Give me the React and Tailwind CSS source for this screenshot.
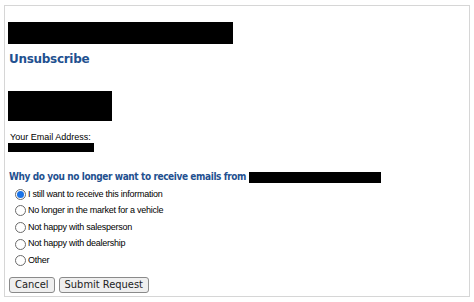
import { useState } from "react";

const reasons = [
  "I still want to receive this information",
  "No longer in the market for a vehicle",
  "Not happy with salesperson",
  "Not happy with dealership",
  "Other",
];

function Radio({ checked }) {
  return (
    <span className="flex h-[11px] w-[11px] shrink-0 items-center justify-center rounded-full border border-[#6b6b6b] bg-white">
      {checked && <span className="h-[7px] w-[7px] rounded-full bg-[#1a73e8]" />}
    </span>
  );
}

export default function App() {
  const [reason, setReason] = useState(0);

  return (
    <div className="h-[302px] w-[474px] bg-white pl-[4px] pt-[5px]">
      <div className="h-[292px] w-[466px] border border-[#d6d6d6] pl-[3px]">
        <div className="mt-[16px] h-[22px] w-[225px] bg-black" />

        <h1 className="mt-[7px] pl-[1px] font-['DejaVu_Sans',sans-serif] text-[12px] font-bold leading-[16px] tracking-[-0.3px] text-[#1f5190]">
          Unsubscribe
        </h1>

        <div className="mt-[24px] h-[30px] w-[104px] bg-black" />

        <div className="mt-[10px] pl-[2px] font-['Liberation_Sans',Arial,sans-serif] text-[9px] leading-[12px] text-black">
          Your Email Address:
        </div>
        <div className="h-[9px] w-[86px] bg-black" />

        <div className="mt-[18px] flex items-center pl-[1px]">
          <span className="font-['DejaVu_Sans',sans-serif] text-[10px] font-bold leading-[14px] tracking-[-0.4px] text-[#1f5190] [font-stretch:condensed]">
            Why do you no longer want to receive emails from
          </span>
          <span className="ml-[3px] h-[11px] w-[132px] bg-black" />
        </div>

        <div className="mt-[2px] flex flex-col">
          {reasons.map((r, i) => (
            <label
              key={r}
              onClick={() => setReason(i)}
              className="flex h-[16.6px] items-center gap-[2px] pl-[7px] font-['Liberation_Sans',Arial,sans-serif] text-[9px] tracking-[-0.25px] text-black"
            >
              <Radio checked={reason === i} />
              <span>{r}</span>
            </label>
          ))}
        </div>

        <div className="mt-[8px] flex gap-[4px] pl-[1px] font-['DejaVu_Sans',sans-serif] text-[11px] [font-stretch:condensed]">
          <button className="h-[16px] rounded-[3px] border border-[#8a8a8a] bg-[#efefef] px-[5px] leading-[13px] text-[#222]">
            Cancel
          </button>
          <button className="h-[16px] rounded-[3px] border border-[#8a8a8a] bg-[#efefef] px-[5px] leading-[13px] text-[#222]">
            Submit Request
          </button>
        </div>
      </div>
    </div>
  );
}
